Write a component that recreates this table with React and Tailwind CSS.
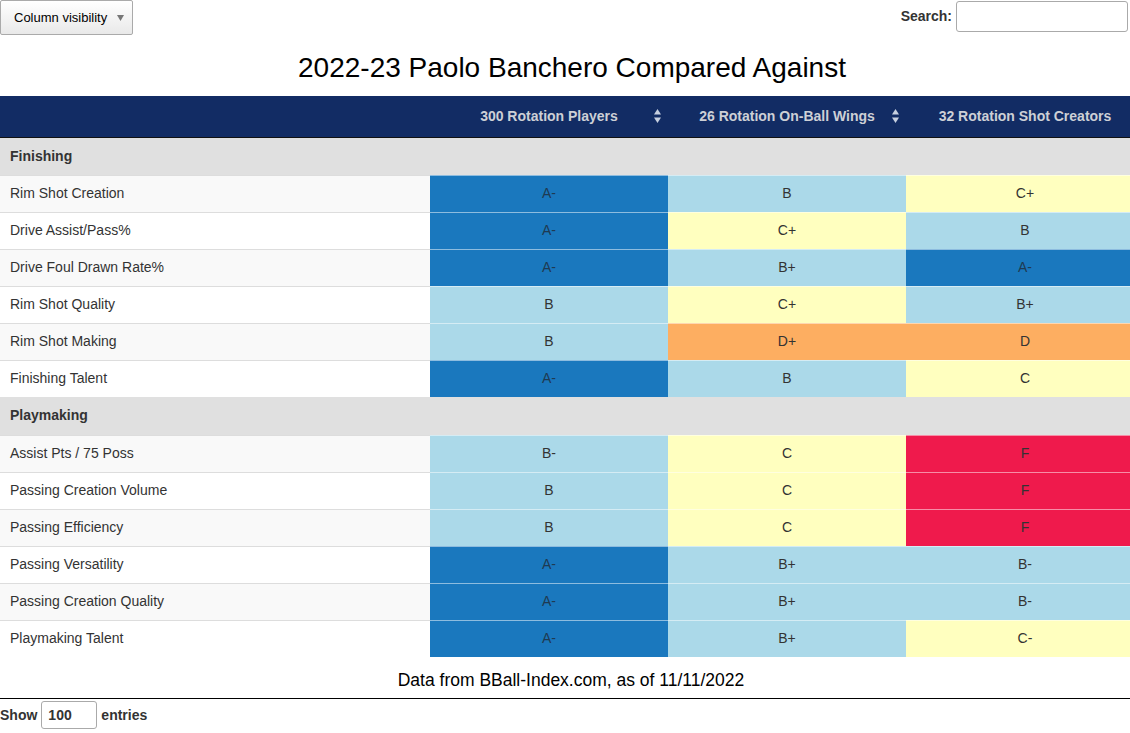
import React from "react";

const COLORS = {
  "A-": "bg-[#1a78be]",
  "B+": "bg-[#abd9e9]",
  B: "bg-[#abd9e9]",
  "B-": "bg-[#abd9e9]",
  "C+": "bg-[#ffffbf]",
  C: "bg-[#ffffbf]",
  "C-": "bg-[#ffffbf]",
  "D+": "bg-[#fdae61]",
  D: "bg-[#fdae61]",
  F: "bg-[#ef1a4c]",
};

const groups = [
  {
    name: "Finishing",
    rows: [
      ["Rim Shot Creation", "A-", "B", "C+"],
      ["Drive Assist/Pass%", "A-", "C+", "B"],
      ["Drive Foul Drawn Rate%", "A-", "B+", "A-"],
      ["Rim Shot Quality", "B", "C+", "B+"],
      ["Rim Shot Making", "B", "D+", "D"],
      ["Finishing Talent", "A-", "B", "C"],
    ],
  },
  {
    name: "Playmaking",
    rows: [
      ["Assist Pts / 75 Poss", "B-", "C", "F"],
      ["Passing Creation Volume", "B", "C", "F"],
      ["Passing Efficiency", "B", "C", "F"],
      ["Passing Versatility", "A-", "B+", "B-"],
      ["Passing Creation Quality", "A-", "B+", "B-"],
      ["Playmaking Talent", "A-", "B+", "C-"],
    ],
  },
];

const SortIcon = () => (
  <svg width="9" height="16" viewBox="0 0 9 16" className="absolute right-[6px] top-[12px]">
    <path d="M4.5 1 L8 6.5 H1 Z" fill="#c7d0e0" />
    <path d="M4.5 15 L8 9.5 H1 Z" fill="#c7d0e0" />
  </svg>
);

const App = () => {
  return (
    <div
      className="w-[1130px] h-[733px] overflow-hidden bg-white text-[#333] text-[14px]"
      style={{ fontFamily: '"Liberation Sans", Arial, sans-serif' }}
    >
      {/* top controls */}
      <div className="flex justify-between items-start h-[36px]">
        <button className="h-[35px] w-[133px] flex items-center pl-[13px] gap-[10px] whitespace-nowrap text-[13px] text-black border border-[#aaa] rounded-[2px] bg-gradient-to-b from-white to-[#e9e9e9]">
          Column visibility
          <svg width="7" height="6" viewBox="0 0 7 6">
            <path d="M0 0 H7 L3.5 6 Z" fill="#777" />
          </svg>
        </button>
        <div className="flex items-center gap-[4px] pt-[1px] pr-[2px]">
          <span className="font-bold text-[14px]">Search:</span>
          <div className="w-[172px] h-[31px] border border-[#aaa] rounded-[3px]" />
        </div>
      </div>

      <h1 className="text-center text-[28px] leading-[64px] h-[60px] pl-[14px] text-black">
        2022-23 Paolo Banchero Compared Against
      </h1>

      <table className="table-fixed border-collapse w-[1144px]">
        <colgroup>
          <col className="w-[430px]" />
          <col className="w-[238px]" />
          <col className="w-[238px]" />
          <col className="w-[238px]" />
        </colgroup>
        <thead>
          <tr className="bg-[#122c64] h-[41px] border-b border-[#111]">
            <th />
            {["300 Rotation Players", "26 Rotation On-Ball Wings", "32 Rotation Shot Creators"].map((h, i) => (
              <th key={h} className="relative text-center font-bold text-[#cdd0d6] text-[14px]">
                {h}
                {i < 2 && <SortIcon />}
              </th>
            ))}
          </tr>
        </thead>
        <tbody>
          {groups.map((g) => (
            <React.Fragment key={g.name}>
              <tr className="bg-[#e0e0e0] h-[38px]">
                <td colSpan={4} className="px-[10px] font-bold">
                  {g.name}
                </td>
              </tr>
              {g.rows.map((r, ri) => (
                <tr key={r[0]} className="h-[37px]">
                  <td
                    className={`px-[10px] border-t border-[#dddddd] ${
                      ri % 2 === 0 ? "bg-[#f9f9f9]" : "bg-white"
                    }`}
                  >
                    {r[0]}
                  </td>
                  {r.slice(1).map((grade, gi) => (
                    <td
                      key={gi}
                      className={`text-center border-t border-white/50 ${COLORS[grade]} ${
                        grade === "A-" ? "text-[#1f3a52]" : "text-[#333]"
                      }`}
                    >
                      {grade}
                    </td>
                  ))}
                </tr>
              ))}
            </React.Fragment>
          ))}
        </tbody>
      </table>

      <div className="text-center text-[17.5px] text-black h-[42px] leading-[46px] pl-[12px] border-b border-black">
        Data from BBall-Index.com, as of 11/11/2022
      </div>

      <div className="flex items-center gap-[4px] h-[32px] font-bold">
        <span>Show</span>
        <div className="w-[56px] h-[28px] border border-[#aaa] rounded-[3px] pl-[6px] flex items-center font-bold">
          100
        </div>
        <span>entries</span>
      </div>
    </div>
  );
};

export default App;
